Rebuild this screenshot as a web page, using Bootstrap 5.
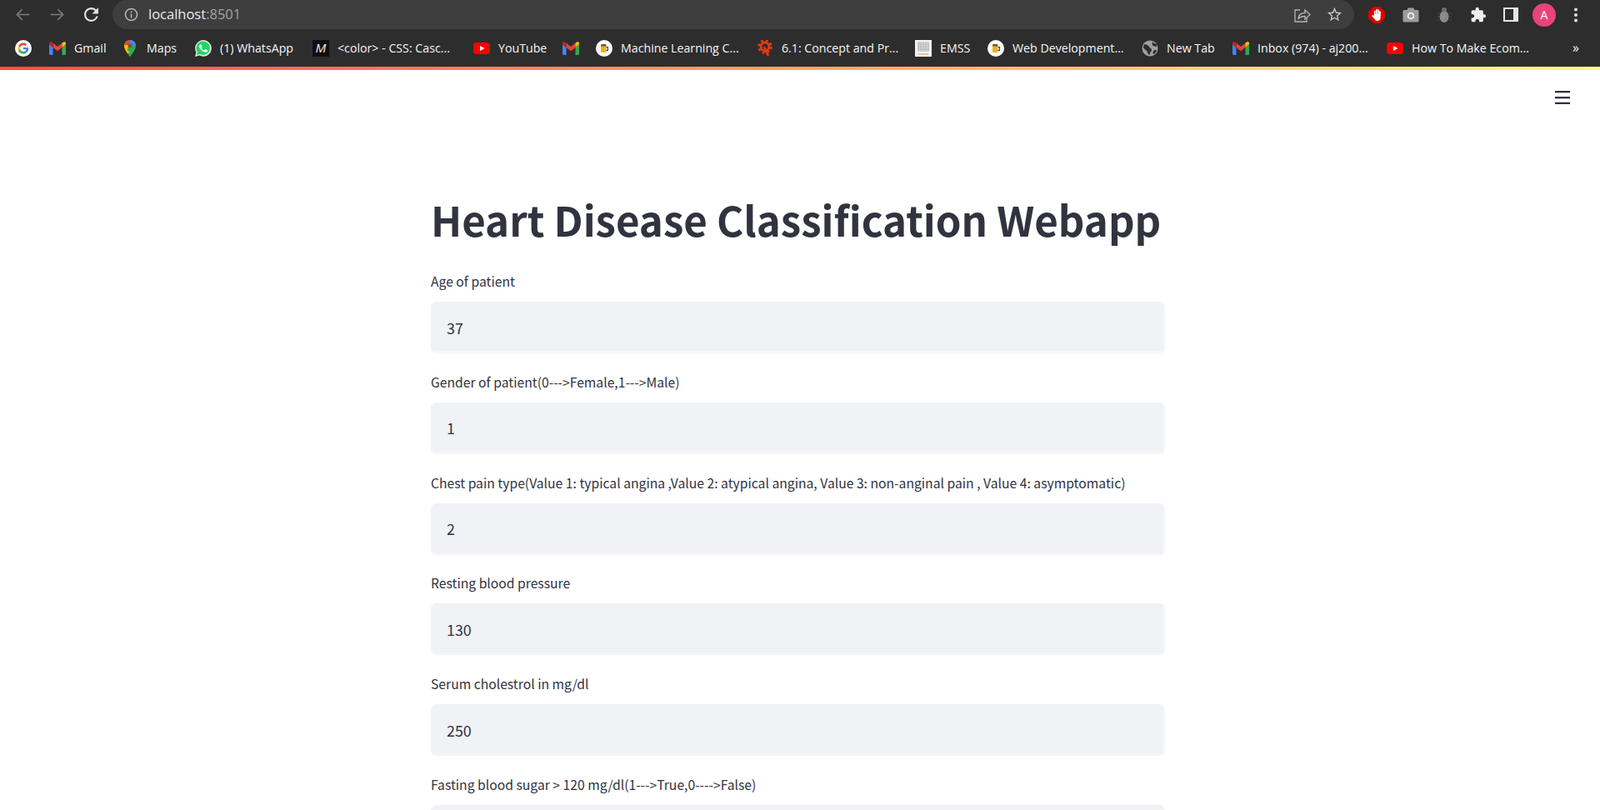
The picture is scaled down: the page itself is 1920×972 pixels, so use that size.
<!DOCTYPE html>
<html lang="en">
<head>
    <meta charset="UTF-8">
    <meta name="viewport" content="width=device-width, initial-scale=1.0">
    <title>Heart Disease Classification Webapp</title>
    <link href="https://cdn.jsdelivr.net/npm/bootstrap@5.3.0/dist/css/bootstrap.min.css" rel="stylesheet">
    <style>
        html, body {
            height: 100%;
            overflow: hidden;
        }
        body {
            background-color: #fff;
            color: #31333f;
            font-family: "Noto Sans CJK SC", "Noto Sans", sans-serif;
        }
        /* browser chrome */
        .toolbar {
            height: 35px;
            background-color: #2d2d2d;
            padding-left: 18px;
        }
        .toolbar svg {
            display: block;
            flex: none;
        }
        .nav-arrow {
            width: 19px;
            height: 19px;
            margin-right: 22px;
        }
        .address {
            width: 1490px;
            height: 35px;
            margin-left: -6px;
            background-color: #3e3e3e;
            border-radius: 18px;
            padding: 0 14px;
            font-family: "Open Sans", sans-serif;
            font-size: 16.5px;
            color: #e8eaed;
        }
        .address .port {
            color: #a3a3a3;
        }
        .star-gap {
            margin-left: 19px;
        }
        .ext {
            width: 20px;
            height: 20px;
        }
        .ext-bar {
            gap: 20.5px;
            margin-left: 17px;
        }
        .avatar {
            width: 28px;
            height: 28px;
            margin-left: -5.5px;
            border-radius: 50%;
            background-color: #e8437c;
            color: #fff;
            font-family: "Open Sans", sans-serif;
            font-size: 14px;
        }
        .bookmarks {
            height: 45px;
            background-color: #2d2d2d;
            padding: 1px 0 0 18px;
            font-family: "Open Sans", sans-serif;
            font-size: 14.2px;
            color: #f6f6f6;
            white-space: nowrap;
            grid-template-columns: 41px 87px 88px 141px 193px 107px 40px 193px 190px 87px 185px 109px 185px auto;
        }
        .bookmark {
            gap: 10px;
        }
        .bookmark svg, .bookmark .medium-icon {
            width: 20px;
            height: 20px;
            flex: none;
            display: block;
        }
        .medium-icon {
            background-color: #0f0f12;
            color: #e8e8e8;
            font: italic 15px/20px "Liberation Sans", sans-serif;
            text-align: center;
        }
        .more-marks {
            position: absolute;
            left: 1887px;
            top: 47px;
            font-size: 16px;
            line-height: 20px;
        }
        .decoration {
            height: 4px;
            background-image: linear-gradient(90deg, #ff4b4b, #fffd80);
        }
        /* page */
        .page {
            padding-right: 5px;
        }
        .hamburger {
            position: absolute;
            left: 1866px;
            top: 109px;
            width: 18px;
            height: 16px;
        }
        .report {
            width: 881px;
            padding-top: 144px;
        }
        .report h1 {
            font-size: 49.2px;
            font-weight: 700;
            line-height: 70px;
            margin: 0 0 29px 0;
            white-space: nowrap;
        }
        .field {
            height: 120.75px;
        }
        .field label {
            display: block;
            font-size: 15.7px;
            line-height: 22px;
            margin-bottom: 13px;
        }
        .number-box {
            height: 62px;
            border: 1px solid #f0f2f6;
            border-radius: 6px;
            overflow: hidden;
        }
        .number-box .form-control {
            height: 100%;
            background-color: #f0f2f6;
            border: 0;
            border-right: 1px solid #f9fafb;
            border-bottom: 1px solid #f9fafb;
            border-radius: 0;
            padding: 0 0 0 18px;
            font-size: 17.9px;
            color: #31333f;
            box-shadow: none;
        }
    </style>
</head>
<body>
    <svg width="0" height="0" class="position-absolute">
        <defs>
            <symbol id="gmail" viewBox="0 0 20 16">
                <path fill="#4285f4" d="M0 3v11.5A1.5 1.5 0 0 0 1.5 16h3V7z"/>
                <path fill="#34a853" d="M20 3v11.5a1.5 1.5 0 0 1-1.5 1.5h-3V7z"/>
                <path fill="#ea4335" d="M4.5 7V1.6L10 6l5.5-4.4V7L10 11.2z"/>
                <path fill="#fbbc04" d="M15.5 1.6l2-1.3A1.6 1.6 0 0 1 20 1.5V3l-4.5 4z"/>
                <path fill="#c5221f" d="M4.5 1.6l-2-1.3A1.6 1.6 0 0 0 0 1.5V3l4.5 4z"/>
            </symbol>
            <symbol id="youtube" viewBox="0 0 20 20">
                <rect y="3" width="20" height="14" rx="4" fill="#f00"/>
                <path fill="#fff" d="M8 7l5.5 3L8 13z"/>
            </symbol>
            <symbol id="beer" viewBox="0 0 20 20">
                <circle cx="10" cy="10" r="10" fill="#fff"/>
                <rect x="6" y="7" width="6.5" height="8" fill="#eeb21d"/>
                <rect x="6" y="5" width="6.5" height="2.4" rx="1" fill="#6b5a2a"/>
                <path fill="none" stroke="#333" stroke-width="1.2" d="M12.5 8.5h1.8v4h-1.8"/>
            </symbol>
        </defs>
    </svg>

    <div class="toolbar d-flex align-items-center">
        <svg class="nav-arrow" viewBox="0 0 24 24" fill="none" stroke="#7b7b7b" stroke-width="2"><path d="M22 12H3M11 4l-8 8 8 8"/></svg>
        <svg class="nav-arrow" viewBox="0 0 24 24" fill="none" stroke="#7b7b7b" stroke-width="2"><path d="M2 12h19M13 4l8 8-8 8"/></svg>
        <svg class="nav-arrow" viewBox="3 3 18 18" fill="#e3e3e3"><path d="M17.65 6.35A7.958 7.958 0 0 0 12 4c-4.42 0-7.99 3.58-7.99 8s3.57 8 7.99 8c3.73 0 6.84-2.55 7.73-6h-2.08A5.99 5.99 0 0 1 12 18c-3.31 0-6-2.69-6-6s2.69-6 6-6c1.66 0 3.14.69 4.22 1.78L13 11h7V4l-2.35 2.35z"/></svg>
        <div class="address d-flex align-items-center">
            <svg class="me-2" width="17" height="17" viewBox="0 0 17 17" fill="none" stroke="#b5b5b5" stroke-width="1.6"><circle cx="8.5" cy="8.5" r="7"/><path d="M8.5 7.5v5M8.5 4.5v1.7"/></svg>
            <span class="ms-1">localhost<span class="port">:8501</span></span>
            <svg class="ms-auto" width="20" height="18" viewBox="0 0 20 18" fill="none" stroke="#b5b5b5" stroke-width="1.3"><path d="M7 3H1v14h14v-5"/><path d="M5 13c.5-4 3.5-6.5 8-6.5V3l6 5.5-6 5.5v-3.5c-3.500 0-6 1-8 3z"/></svg>
            <svg class="star-gap" width="19" height="19" viewBox="1 1 22 22" fill="#c4c4c4"><path d="M22 9.24l-7.19-.62L12 2 9.19 8.63 2 9.24l5.46 4.73L5.82 21 12 17.27 18.18 21l-1.63-7.03L22 9.24zM12 15.4l-3.76 2.27 1-4.28-3.32-2.88 4.38-.38L12 6.1l1.71 4.04 4.38.38-3.32 2.88 1 4.28L12 15.4z"/></svg>
        </div>
        <div class="ext-bar d-flex align-items-center">
            <svg class="ext" viewBox="0 0 20 20">
                <path fill="#e00000" d="M6 0h8l6 6v8l-6 6H6l-6-6V6z"/>
                <path fill="#fff" d="M6.800 9h7.800v4.500c0 2-1.500 3.500-3.700 3.500-1.800 0-2.800-1-3.300-2L4.500 11.500c-.5-1 .7-1.800 1.500-1l.8.8z"/>
                <path stroke="#fff" stroke-width="1.700" stroke-linecap="round" d="M7.700 10V5.500M9.900 10V3.500M12.100 10V4M14.000 10V6"/>
            </svg>
            <svg class="ext" viewBox="0 0 20 20"><path fill="#9b9b9b" d="M2 4h3.500l1-2.500h7l1 2.500H18a1.500 1.500 0 0 1 1.500 1.500V17a1.500 1.500 0 0 1-1.500 1.500H2A1.500 1.500 0 0 1 .5 17V5.500A1.500 1.500 0 0 1 2 4z"/><circle cx="10" cy="11" r="4.300" fill="#f0f0f0"/><circle cx="10" cy="11" r="2.500" fill="#9b9b9b"/></svg>
            <svg class="ext" viewBox="0 0 20 20"><ellipse cx="10" cy="12" rx="5.500" ry="7" fill="#8a8a8a"/><ellipse cx="10" cy="3.500" rx="3" ry="2.500" fill="#6f6f6f"/><path stroke="#4a4a4a" d="M1.500 8h3M1.500 12h3M1.500 16h3M15.500 8h3M15.500 12h3M15.500 16h3"/></svg>
            <svg class="ext" viewBox="0 0 24 24" fill="#efefef"><path d="M20.500 11H19V7c0-1.100-.9-2-2-2h-4V3.500C13 2.120 11.880 1 10.500 1S8 2.120 8 3.500V5H4c-1.100 0-1.990.9-1.990 2v3.800H3.500c1.490 0 2.700 1.210 2.700 2.700s-1.210 2.700-2.700 2.700H2V20c0 1.100.9 2 2 2h3.800v-1.500c0-1.490 1.210-2.700 2.700-2.700 1.490 0 2.700 1.210 2.700 2.700V22H17c1.100 0 2-.9 2-2v-4h1.500c1.380 0 2.500-1.120 2.500-2.500S21.880 11 20.500 11z"/></svg>
            <svg class="ext" viewBox="0 0 20 20"><rect x="0" y="1" width="18" height="17" fill="#e5e5e5"/><rect x="2" y="3" width="10" height="13" fill="#2d2d2d"/></svg>
            <div class="avatar d-flex align-items-center justify-content-center">A</div>
            <svg width="6" height="18" viewBox="0 0 6 18" fill="#e3e3e3"><circle cx="3" cy="2.500" r="2"/><circle cx="3" cy="9" r="2"/><circle cx="3" cy="15.500" r="2"/></svg>
        </div>
    </div>

    <div class="bookmarks d-grid align-items-center">
        <div class="bookmark d-flex align-items-center">
            <svg viewBox="0 0 20 20">
                <circle cx="10" cy="10" r="10" fill="#fff"/>
                <g transform="translate(3.500 3.500) scale(.27)">
                    <path fill="#ea4335" d="M24 9.500c3.540 0 6.710 1.220 9.210 3.600l6.850-6.850C35.900 2.380 30.470 0 24 0 14.620 0 6.510 5.380 2.560 13.220l7.980 6.190C12.430 13.720 17.740 9.500 24 9.500z"/>
                    <path fill="#4285f4" d="M46.980 24.550c0-1.570-.15-3.090-.38-4.550H24v9.020h12.940c-.58 2.960-2.260 5.480-4.780 7.180l7.730 6c4.510-4.180 7.090-10.360 7.090-17.650z"/>
                    <path fill="#fbbc05" d="M10.530 28.590c-.48-1.450-.76-2.990-.76-4.590s.27-3.140.76-4.590l-7.980-6.190C.92 16.460 0 20.120 0 24c0 3.880.92 7.540 2.560 10.780l7.970-6.190z"/>
                    <path fill="#34a853" d="M24 48c6.480 0 11.930-2.130 15.890-5.810l-7.730-6c-2.150 1.450-4.920 2.300-8.160 2.300-6.260 0-11.570-4.220-13.470-9.910l-7.980 6.190C6.510 42.620 14.620 48 24 48z"/>
                </g>
            </svg>
        </div>
        <div class="bookmark d-flex align-items-center"><svg><use href="#gmail"/></svg><span>Gmail</span></div>
        <div class="bookmark d-flex align-items-center">
            <svg viewBox="0 0 20 20">
                <clipPath id="pin"><path d="M10 0C6 0 3 3 3 7c0 5 7 13 7 13s7-8 7-13c0-4-3-7-7-7z"/></clipPath>
                <g clip-path="url(#pin)">
                    <rect x="3" y="0" width="14" height="20" fill="#34a853"/>
                    <rect x="3" y="0" width="7" height="6" fill="#ea4335"/>
                    <rect x="10" y="0" width="7" height="7" fill="#4285f4"/>
                    <path fill="#fbbc04" d="M3 6h5l-1 6 3 3-7 2z"/>
                </g>
                <circle cx="10" cy="7" r="2.500" fill="#7a5a1e"/>
            </svg>
            <span>Maps</span>
        </div>
        <div class="bookmark d-flex align-items-center">
            <svg viewBox="0 0 24 24">
                <path fill="#e8e8e8" d="M0 24l1.700-6.200A11.800 11.800 0 1 1 6.300 22.300z"/>
                <path fill="#25d366" d="M2.300 21.700l1.200-4.300A9.900 9.900 0 1 1 7 20.500z"/>
                <path fill="#fff" d="M17.472 14.382c-.297-.149-1.758-.867-2.030-.967-.273-.099-.471-.148-.670.150-.197.297-.767.966-.940 1.164-.173.199-.347.223-.644.075-.297-.150-1.255-.463-2.390-1.475-.883-.788-1.480-1.761-1.653-2.059-.173-.297-.018-.458.130-.606.134-.133.298-.347.446-.520.149-.174.198-.298.298-.497.099-.198.050-.371-.025-.520-.075-.149-.669-1.612-.916-2.207-.242-.579-.487-.500-.669-.510-.173-.008-.371-.010-.570-.010-.198 0-.520.074-.792.372-.272.297-1.040 1.016-1.040 2.479 0 1.462 1.065 2.875 1.213 3.074.149.198 2.096 3.200 5.077 4.487.709.306 1.262.489 1.694.625.712.227 1.360.195 1.871.118.571-.085 1.758-.719 2.006-1.413.248-.694.248-1.289.173-1.413-.074-.124-.272-.198-.570-.347z"/>
            </svg>
            <span>(1) WhatsApp</span>
        </div>
        <div class="bookmark d-flex align-items-center"><div class="medium-icon">M</div><span>&lt;color&gt; - CSS: Casc...</span></div>
        <div class="bookmark d-flex align-items-center"><svg><use href="#youtube"/></svg><span>YouTube</span></div>
        <div class="bookmark d-flex align-items-center"><svg><use href="#gmail"/></svg></div>
        <div class="bookmark d-flex align-items-center"><svg><use href="#beer"/></svg><span>Machine Learning C...</span></div>
        <div class="bookmark d-flex align-items-center">
            <svg viewBox="0 0 20 20" fill="none" stroke="#e63a12">
                <circle cx="10" cy="8" r="5" stroke-width="3"/>
                <circle cx="10" cy="8" r="7.500" stroke-width="2.500" stroke-dasharray="3 3"/>
                <path stroke-width="2.500" d="M9 8l5 11"/>
            </svg>
            <span>6.1: Concept and Pr...</span>
        </div>
        <div class="bookmark d-flex align-items-center">
            <svg viewBox="0 0 20 20">
                <rect width="20" height="20" fill="#f2f2f2"/>
                <rect x="3" y="2" width="14" height="12" fill="#d0d0d0"/>
                <path stroke="#aaa" stroke-dasharray="2 1" d="M3 5h14M3 8h14M3 11h14"/>
                <rect x="4" y="16" width="12" height="2" fill="#f0c4a4"/>
            </svg>
            <span>EMSS</span>
        </div>
        <div class="bookmark d-flex align-items-center"><svg><use href="#beer"/></svg><span>Web Development...</span></div>
        <div class="bookmark d-flex align-items-center">
            <svg viewBox="0 0 20 20">
                <circle cx="10" cy="10" r="9.500" fill="#9aa0a6"/>
                <path fill="#2d2d2d" d="M3 5c2 0 5 1 6 3s3 2 3 4-2 2-2 4-1 2-2 1-1-3-2-4-3-2-4-4zM13 2c1 2 3 2 5 3v3c-2 0-3-1-4-1s-2-3-1-5zM14 13c1-1 2-1 4-1-1 3-2 4-4 5-1-1 0-3 0-4z"/>
            </svg>
            <span>New Tab</span>
        </div>
        <div class="bookmark d-flex align-items-center"><svg><use href="#gmail"/></svg><span>Inbox (974) - aj200...</span></div>
        <div class="bookmark d-flex align-items-center"><svg><use href="#youtube"/></svg><span>How To Make Ecom...</span></div>
        <span class="more-marks">»</span>
    </div>
    <div class="decoration"></div>

    <svg class="hamburger" viewBox="0 0 18 16" fill="#31333f"><rect width="18" height="2.300"/><rect y="7" width="18" height="2.300"/><rect y="13.700" width="18" height="2.300"/></svg>

    <div class="page">
        <div class="report mx-auto">
            <h1>Heart Disease Classification Webapp</h1>
            <div class="field">
                <label for="age">Age of patient</label>
                <div class="number-box"><input id="age" class="form-control" type="text" value="37"></div>
            </div>
            <div class="field">
                <label for="gender">Gender of patient(0---&gt;Female,1---&gt;Male)</label>
                <div class="number-box"><input id="gender" class="form-control" type="text" value="1"></div>
            </div>
            <div class="field">
                <label for="cp">Chest pain type(Value 1: typical angina ,Value 2: atypical angina, Value 3: non-anginal pain , Value 4: asymptomatic)</label>
                <div class="number-box"><input id="cp" class="form-control" type="text" value="2"></div>
            </div>
            <div class="field">
                <label for="bp">Resting blood pressure</label>
                <div class="number-box"><input id="bp" class="form-control" type="text" value="130"></div>
            </div>
            <div class="field">
                <label for="chol">Serum cholestrol in mg/dl</label>
                <div class="number-box"><input id="chol" class="form-control" type="text" value="250"></div>
            </div>
            <div class="field">
                <label for="fbs">Fasting blood sugar &gt; 120 mg/dl(1---&gt;True,0----&gt;False)</label>
                <div class="number-box"><input id="fbs" class="form-control" type="text" value="0"></div>
            </div>
        </div>
    </div>

    <script src="https://cdn.jsdelivr.net/npm/bootstrap@5.3.0/dist/js/bootstrap.bundle.min.js"></script>
</body>
</html>
